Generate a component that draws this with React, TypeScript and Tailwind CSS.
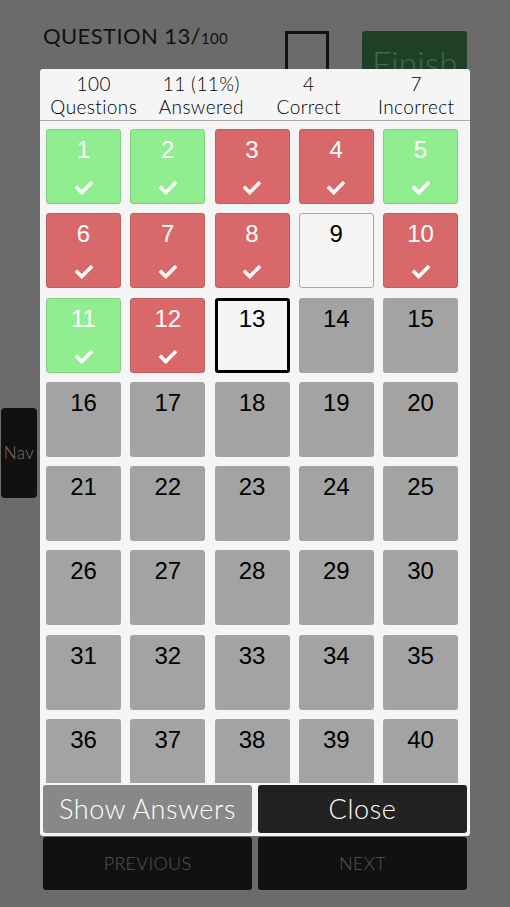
import React from "react";
import { FaCheck } from "react-icons/fa";

type S = "c" | "i" | "u" | "cur" | "n";

const states: Record<number, S> = {
  1: "c", 2: "c", 3: "i", 4: "i", 5: "c",
  6: "i", 7: "i", 8: "i", 9: "u", 10: "i",
  11: "c", 12: "i", 13: "cur",
};

const gothic = { fontFamily: "Lato, 'DejaVu Sans', sans-serif" };
const arial = { fontFamily: "'Liberation Sans', Arial, sans-serif" };

function Tile({ n }: { n: number }) {
  const s = states[n] ?? "n";
  let cls = "bg-[#a3a3a3] text-black";
  if (s === "c") cls = "bg-[#90ee90] border border-[#7fcf7f] text-white";
  else if (s === "i") cls = "bg-[#d9686a] border border-[#c25d5f] text-white";
  else if (s === "u") cls = "bg-[#f5f5f5] border border-[#a8a8a8] text-black";
  else if (s === "cur") cls = "bg-[#f5f5f5] border-[3px] border-black text-black";
  const answered = s === "c" || s === "i";
  return (
    <div
      className={`h-[75px] w-[75px] rounded-[3px] flex flex-col items-center ${cls} ${s === "cur" ? "pt-[4px]" : s === "n" ? "pt-[7px]" : "pt-[6px]"}`}
      style={arial}
    >
      <span className="text-[24px] leading-[28px]">{n}</span>
      {answered && <FaCheck className="mt-[15px] text-white" size={18} />}
    </div>
  );
}

function Stat({ a, b }: { a: string; b: string }) {
  return (
    <div className="flex flex-col items-center">
      <div>{a}</div>
      <div>{b}</div>
    </div>
  );
}

export default function App() {
  const nums = Array.from({ length: 40 }, (_, i) => i + 1);
  return (
    <div className="relative h-[907px] w-[510px] overflow-hidden bg-[#6b6b6b] flex flex-col font-light" style={gothic}>
      {/* background page (dimmed) */}
      <div className="flex items-start px-[43px] pt-[22px]">
        <div className="text-[#111] text-[22px] leading-[26px] tracking-[0.4px] mt-[1px] font-normal">
          QUESTION 13/<span className="text-[15px]">100</span>
        </div>
        <div className="ml-[57px] mt-[9px] h-[44px] w-[44px] border-[3px] border-[#111]" />
        <div className="ml-auto mt-[9px] h-[50px] w-[105px] rounded-[3px] bg-[#1f3f27] text-[#3e6b49] text-[34px] leading-[40px] pt-[12px] pl-[10px] overflow-hidden">
          Finish
        </div>
      </div>

      <div className="mt-auto flex gap-[6px] px-[43px] pb-[17px]">
        <div className="h-[53px] flex-1 rounded-[3px] bg-[#111] text-[#555] text-[18px] tracking-[0.3px] flex items-center justify-center">PREVIOUS</div>
        <div className="h-[53px] flex-1 rounded-[3px] bg-[#111] text-[#555] text-[18px] tracking-[0.3px] flex items-center justify-center">NEXT</div>
      </div>

      {/* Nav tab */}
      <div className="absolute left-[1px] top-[408px] h-[90px] w-[36px] rounded-[4px] bg-[#111] text-[#777] text-[17px] tracking-[0.5px] flex items-center justify-center">
        Nav
      </div>

      {/* modal */}
      <div className="absolute left-[40px] top-[69px] w-[430px] h-[767px] bg-[#f5f5f5] rounded-[3px] flex flex-col overflow-hidden">
        <div className="grid grid-cols-4 h-[52px] border-b border-[#a8a8a8] text-black text-[19px] leading-[23px] tracking-[0.4px] pt-[3px]">
          <Stat a="100" b="Questions" />
          <Stat a="11 (11%)" b="Answered" />
          <Stat a="4" b="Correct" />
          <Stat a="7" b="Incorrect" />
        </div>
        <div className="flex-1 overflow-hidden pl-[6px] pt-[8px]">
          <div className="grid grid-cols-[repeat(5,75px)] gap-x-[9.25px] gap-y-[9.3px]">
            {nums.map((n) => (
              <Tile key={n} n={n} />
            ))}
          </div>
        </div>
        <div className="flex gap-[6px] px-[3px] pb-[3px] pt-[2px]">
          <button className="h-[48px] flex-1 rounded-[3px] bg-[#888] text-white text-[27px] tracking-[0.6px] font-light">Show Answers</button>
          <button className="h-[48px] flex-1 rounded-[3px] bg-[#222] text-white text-[27px] tracking-[0.6px] font-light">Close</button>
        </div>
      </div>
    </div>
  );
}
